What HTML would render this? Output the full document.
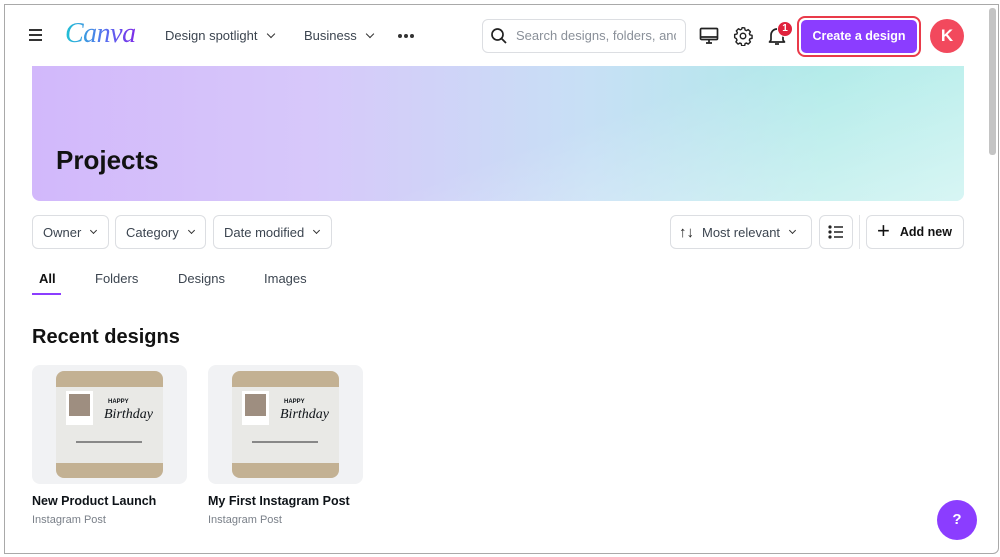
<!DOCTYPE html>
<html><head><meta charset="utf-8"><style>
*{box-sizing:border-box;margin:0;padding:0}
body{width:1000px;height:557px;background:#fff;font-family:"Liberation Sans",sans-serif;color:#0e1318;position:relative;overflow:hidden}
.frame{position:absolute;left:4px;top:4px;width:995px;height:550px;border:1px solid #a9a9a9;border-radius:0 0 6px 0}
.abs{position:absolute}
.btn{position:absolute;border:1px solid #dcdee2;border-radius:6px;height:34px;top:215px;font-size:13px;color:#3c4550;display:flex;align-items:center;padding-left:10px}
.chev{display:inline-block;width:5px;height:5px;border-right:1.6px solid #333;border-bottom:1.6px solid #333;transform:rotate(45deg);margin-left:10px;margin-top:-3px}
.nav{position:absolute;top:28px;font-size:13px;color:#3c4550;display:flex;align-items:center}
.card{position:absolute;top:365px;width:155px;height:119px;background:#f1f2f4;border-radius:8px}
.thumb{position:absolute;left:24px;top:6px;width:107px;height:107px;border-radius:8px;background:#c3b193;overflow:hidden}
.paper{position:absolute;left:0;top:16px;width:107px;height:76px;background:#e9e9e6}
</style></head><body>
<div class="frame"></div>
<div class="abs" style="left:989px;top:8px;width:7px;height:147px;background:#c4c4c4;border-radius:3px"></div>
<div class="abs" style="left:29px;top:29px;width:13px;height:2px;background:#333;box-shadow:0 5px 0 #333,0 10px 0 #333"></div>
<div class="abs" style="left:65px;top:18px;font-family:'Liberation Serif',serif;font-style:italic;font-size:28px;background:linear-gradient(90deg,#1fc2d4,#5a6af0 60%,#7d2ae8);-webkit-background-clip:text;color:transparent;letter-spacing:-0.5px">Canva</div>
<div class="nav" style="left:165px">Design spotlight <span class="chev" style="margin-left:10px;width:6px;height:6px"></span></div>
<div class="nav" style="left:304px">Business <span class="chev" style="margin-left:10px;width:6px;height:6px"></span></div>
<div class="abs" style="left:398px;top:34px;width:4px;height:4px;border-radius:2px;background:#333;box-shadow:6px 0 0 #333,12px 0 0 #333"></div>
<div class="abs" style="left:482px;top:19px;width:204px;height:34px;border:1px solid #dcdee2;border-radius:6px"></div>
<svg class="abs" style="left:490px;top:27px" width="18" height="18" viewBox="0 0 18 18"><circle cx="7.5" cy="7.5" r="5.5" fill="none" stroke="#222" stroke-width="1.7"/><path d="M11.5 11.5L16 16" stroke="#222" stroke-width="1.8"/></svg>
<div class="abs" style="left:516px;top:28px;font-size:13px;color:#8a9099;white-space:nowrap;width:160px;overflow:hidden">Search designs, folders, and</div>
<svg class="abs" style="left:699px;top:27px" width="20" height="18" viewBox="0 0 20 18"><rect x="1.5" y="1.5" width="17" height="11" rx="1" fill="none" stroke="#222" stroke-width="1.7"/><path d="M1.5 10h17M7 16h6M10 13v3" stroke="#222" stroke-width="1.7"/></svg>
<svg class="abs" style="left:733px;top:26px" width="20" height="20" viewBox="0 0 24 24"><path d="M12 2l2 .3.5 2.5 1.6.8 2.2-1.3 2.6 2.6-1.3 2.2.7 1.6 2.6.5v3.6l-2.6.5-.7 1.6 1.3 2.2-2.6 2.6-2.2-1.3-1.6.7-.5 2.6h-3.6l-.5-2.6-1.6-.7-2.2 1.3-2.6-2.6 1.3-2.2-.7-1.6L2 13.8v-3.6l2.6-.5.7-1.6L4 5.9l2.6-2.6 2.2 1.3 1.6-.8L10.9 2z" fill="none" stroke="#222" stroke-width="1.7" stroke-linejoin="round"/><circle cx="12" cy="12" r="3.3" fill="none" stroke="#222" stroke-width="1.7"/></svg>
<svg class="abs" style="left:767px;top:26px" width="20" height="20" viewBox="0 0 20 20"><path d="M4 14V9a6 6 0 0112 0v5l1.5 2h-15z" fill="none" stroke="#222" stroke-width="1.7" stroke-linejoin="round"/><path d="M8 18h4" stroke="#222" stroke-width="1.7"/></svg>
<div class="abs" style="left:777px;top:21px;width:16px;height:16px;border-radius:8px;background:#e0223c;color:#fff;font-size:10px;font-weight:bold;text-align:center;line-height:13px;border:1.5px solid #fff">1</div>
<div class="abs" style="left:797px;top:16px;width:124px;height:41px;border:2px solid #e93a4a;border-radius:8px"></div>
<div class="abs" style="left:801px;top:20px;width:116px;height:33px;background:#8b3dff;border-radius:5px;color:#fff;font-size:12.5px;font-weight:bold;text-align:center;line-height:33px">Create a design</div>
<div class="abs" style="left:930px;top:19px;width:34px;height:34px;border-radius:17px;background:#f2495d;color:#fff;font-size:17px;font-weight:bold;text-align:center;line-height:34px">K</div>
<div class="abs" style="left:32px;top:66px;width:932px;height:135px;border-radius:0 0 8px 8px;background:linear-gradient(90deg,#d2b8fb 0%,#d7c8fa 30%,#c7e0f5 60%,#aeeae8 85%,#b0ece9 100%)"></div>
<div class="abs" style="left:32px;top:66px;width:932px;height:135px;border-radius:0 0 8px 8px;background:linear-gradient(160deg,rgba(255,255,255,0) 55%,rgba(255,255,255,.5) 100%)"></div>
<div class="abs" style="left:56px;top:145px;font-size:26px;font-weight:bold;color:#121212">Projects</div>
<div class="btn" style="left:32px;width:77px">Owner<span class="chev"></span></div>
<div class="btn" style="left:115px;width:91px">Category<span class="chev"></span></div>
<div class="btn" style="left:213px;width:119px">Date modified<span class="chev"></span></div>
<div class="btn" style="left:670px;width:142px;padding-left:8px"><span style="font-size:15px;color:#222;margin-right:8px">↑↓</span>Most relevant<span class="chev"></span></div>
<div class="btn" style="left:819px;width:34px;padding:0;justify-content:center"><svg width="16" height="14" viewBox="0 0 16 14"><circle cx="2" cy="2" r="1.6" fill="#222"/><circle cx="2" cy="7" r="1.6" fill="#222"/><circle cx="2" cy="12" r="1.6" fill="#222"/><path d="M6 2h9M6 7h9M6 12h9" stroke="#222" stroke-width="1.5"/></svg></div>
<div class="abs" style="left:859px;top:215px;width:1px;height:34px;background:#e3e4e7"></div>
<div class="btn" style="left:866px;width:98px;color:#111;font-weight:bold;padding-left:10px;font-size:12.5px"><span style="font-size:22px;font-weight:normal;margin-right:10px;margin-top:-3px">+</span>Add new</div>
<div class="abs" style="left:39px;top:271px;font-size:13px;font-weight:bold;color:#111">All</div>
<div class="abs" style="left:32px;top:293px;width:29px;height:2px;background:#8b3dff"></div>
<div class="abs" style="left:95px;top:271px;font-size:13px;color:#3c4550">Folders</div>
<div class="abs" style="left:178px;top:271px;font-size:13px;color:#3c4550">Designs</div>
<div class="abs" style="left:264px;top:271px;font-size:13px;color:#3c4550">Images</div>
<div class="abs" style="left:32px;top:326px;font-size:20px;font-weight:bold;color:#121212">Recent designs</div>
<div class="card" style="left:32px"><div class="thumb"><div class="paper"></div>
<div class="abs" style="left:10px;top:20px;width:27px;height:34px;background:#fff"></div><div class="abs" style="left:13px;top:23px;width:21px;height:22px;background:#9e8e80"></div>
<div class="abs" style="left:52px;top:28px;font-size:6px;font-weight:bold">HAPPY</div>
<div class="abs" style="left:48px;top:36px;font-family:'Liberation Serif',serif;font-style:italic;font-size:14px">Birthday</div>
<div class="abs" style="left:20px;top:70px;width:66px;height:2px;background:#888"></div></div></div>
<div class="card" style="left:208px"><div class="thumb"><div class="paper"></div>
<div class="abs" style="left:10px;top:20px;width:27px;height:34px;background:#fff"></div><div class="abs" style="left:13px;top:23px;width:21px;height:22px;background:#9e8e80"></div>
<div class="abs" style="left:52px;top:28px;font-size:6px;font-weight:bold">HAPPY</div>
<div class="abs" style="left:48px;top:36px;font-family:'Liberation Serif',serif;font-style:italic;font-size:14px">Birthday</div>
<div class="abs" style="left:20px;top:70px;width:66px;height:2px;background:#888"></div></div></div>
<div class="abs" style="left:32px;top:494px;font-size:12.5px;font-weight:bold">New Product Launch</div>
<div class="abs" style="left:32px;top:514px;font-size:11px;color:#7a8089">Instagram Post</div>
<div class="abs" style="left:208px;top:494px;font-size:12.5px;font-weight:bold">My First Instagram Post</div>
<div class="abs" style="left:208px;top:514px;font-size:11px;color:#7a8089">Instagram Post</div>
<div class="abs" style="left:937px;top:500px;width:40px;height:40px;border-radius:20px;background:#8b3dff;color:#fff;font-size:15px;font-weight:bold;text-align:center;line-height:40px">?</div>
</body></html>
